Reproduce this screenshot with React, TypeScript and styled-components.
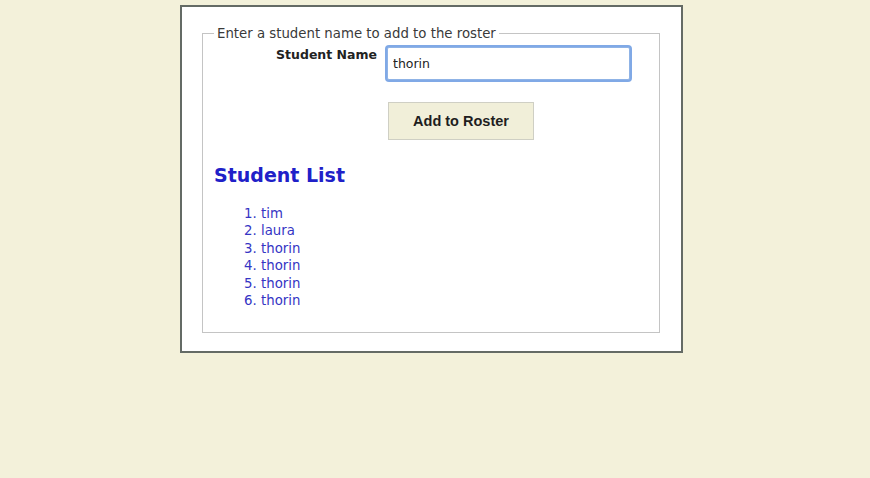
import React, { useState } from 'react'
import styled, { createGlobalStyle } from 'styled-components'

const GlobalStyle = createGlobalStyle`
  html, body {
    margin: 0;
    padding: 0;
    background: #f3f1da;
  }
  body {
    font-family: "DejaVu Sans", "Liberation Sans", sans-serif;
    font-size: 12px;
    color: #222;
  }
`

const Page = styled.div`
  height: 478px;
  padding-top: 5px;
  box-sizing: border-box;
`

const Panel = styled.div`
  width: 503px;
  box-sizing: border-box;
  margin-left: 180px;
  background: #fff;
  border: 2px solid #646b65;
  padding: 19px 21px 18px 20px;
`

const Fieldset = styled.fieldset`
  margin: 0;
  border: 1px solid #c4c4c4;
  padding: 5px 10px 23px 11px;
  min-height: 268px;
`

const Legend = styled.legend`
  padding: 0 3px;
  color: #3a3a3a;
  font-size: 13.3px;
`

const FormRow = styled.div`
  display: grid;
  grid-template-columns: 163px 1fr;
  column-gap: 10px;
  align-items: start;
`

const Label = styled.label`
  font-weight: bold;
  text-align: right;
  padding-top: 1px;
  font-size: 12.5px;
  color: #222;
`

const Input = styled.input`
  width: 243px;
  height: 33px;
  box-sizing: border-box;
  margin: 1px 0 0 0;
  padding: 0 0 0 5px;
  border: 1px solid #8fb3e6;
  border-radius: 2px;
  box-shadow: 0 0 0 2px #80a9e6;
  font-family: inherit;
  font-size: 12.5px;
  color: #222;
  outline: none;
`

const ButtonRow = styled.div`
  padding: 22px 0 0 174px;
`

const Button = styled.button`
  width: 146px;
  height: 38px;
  background: #f1efd9;
  border: 1px solid #cfcfc4;
  border-radius: 0;
  font-family: "Liberation Sans", Arial, sans-serif;
  font-weight: bold;
  font-size: 14.5px;
  color: #1e1e1e;
  cursor: pointer;
`

const Heading = styled.h2`
  margin: 22px 0 0 0;
  color: #2020c8;
  font-size: 19px;
  font-weight: bold;
  line-height: 26px;
`

const List = styled.ol`
  margin: 17px 0 0 0;
  padding-left: 47px;
  color: #3535c4;
  font-size: 13.3px;
  line-height: 17.4px;
`

const App = () => {
  const [name, setName] = useState('thorin')
  const [students, setStudents] = useState(['tim', 'laura', 'thorin', 'thorin', 'thorin', 'thorin'])

  const addStudent = () => {
    if (name.trim()) {
      setStudents([...students, name.trim()])
    }
  }

  return (
    <>
      <GlobalStyle />
      <Page>
        <Panel>
          <Fieldset>
            <Legend>Enter a student name to add to the roster</Legend>
            <FormRow>
              <Label htmlFor="student-name">Student Name</Label>
              <Input id="student-name" value={name} onChange={(e) => setName(e.target.value)} />
            </FormRow>
            <ButtonRow>
              <Button type="button" onClick={addStudent}>Add to Roster</Button>
            </ButtonRow>
            <Heading>Student List</Heading>
            <List>
              {students.map((student, i) => (
                <li key={i}>{student}</li>
              ))}
            </List>
          </Fieldset>
        </Panel>
      </Page>
    </>
  )
}

export default App
